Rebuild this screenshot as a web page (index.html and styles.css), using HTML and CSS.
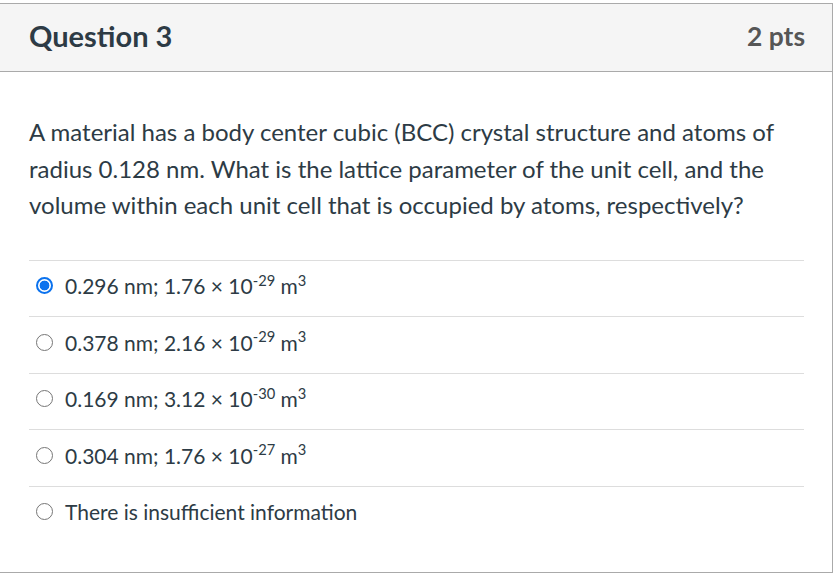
FILE: index.html
```html
<!DOCTYPE html>
<html>
<head>
<meta charset="utf-8">
<link rel="stylesheet" href="styles.css">
</head>
<body>
<div class="card">
  <div class="header">
    <h2 class="title">Question 3</h2>
    <span class="pts">2 pts</span>
  </div>
  <div class="body">
    <p class="question">A material has a body center cubic (BCC) crystal structure and atoms of radius 0.128 nm. What is the lattice parameter of the unit cell, and the volume within each unit cell that is occupied by atoms, respectively?</p>
    <div class="answers">
      <label class="answer"><input class="radio" type="radio" name="q3" checked><span>0.296 nm; 1.76 × 10<sup>-29</sup> m<sup>3</sup></span></label>
      <label class="answer"><input class="radio" type="radio" name="q3"><span>0.378 nm; 2.16 × 10<sup>-29</sup> m<sup>3</sup></span></label>
      <label class="answer"><input class="radio" type="radio" name="q3"><span>0.169 nm; 3.12 × 10<sup>-30</sup> m<sup>3</sup></span></label>
      <label class="answer"><input class="radio" type="radio" name="q3"><span>0.304 nm; 1.76 × 10<sup>-27</sup> m<sup>3</sup></span></label>
      <label class="answer"><input class="radio" type="radio" name="q3"><span>There is insufficient information</span></label>
    </div>
  </div>
</div>
</body>
</html>
```
FILE: styles.css
```css
html, body {
  margin: 0;
  padding: 0;
  background: #ffffff;
}
body {
  padding-top: 3px;
  font-family: Lato, "Liberation Sans", sans-serif;
  color: #2d3b45;
}
.card {
  box-sizing: border-box;
  width: 834px;
  margin-left: -1px;
  height: 570px;
  border: 1px solid #aaaaaa;
}
.header {
  display: flex;
  justify-content: space-between;
  align-items: center;
  height: 67px;
  padding: 0 27px 0 29px;
  background: #f5f5f5;
  border-bottom: 1px solid #aaaaaa;
}
.title {
  margin: 0;
  font-size: 29px;
  font-weight: 700;
  color: #2d3b45;
  padding-bottom: 4px;
}
.pts {
  font-size: 26.4px;
  font-weight: 700;
  color: #565656;
  padding-bottom: 4px;
}
.body {
  padding: 42px 28px 0 29px;
}
.question {
  margin: 0 0 36px 0;
  font-size: 24px;
  line-height: 36.5px;
}
.answers {
  display: flex;
  flex-direction: column;
}
.answer {
  display: flex;
  align-items: center;
  height: 50.5px;
  border-top: 1px solid #dddddd;
  font-size: 21px;
  padding-left: 8px;
  padding-bottom: 5px;
  box-sizing: content-box;
}
.radio {
  appearance: none;
  -webkit-appearance: none;
  box-sizing: border-box;
  flex: none;
  width: 17px;
  height: 17px;
  margin: 0 12px 0 -1px;
  border: 1.6px solid #767676;
  border-radius: 50%;
  background: #ffffff;
}
.radio:checked {
  border: 2px solid #0b72ee;
  background: radial-gradient(circle, #0b72ee 0 4.6px, #ffffff 5.2px);
}
sup {
  font-size: 0.7em;
  line-height: 0;
  position: relative;
  top: -0.05em;
}
```
